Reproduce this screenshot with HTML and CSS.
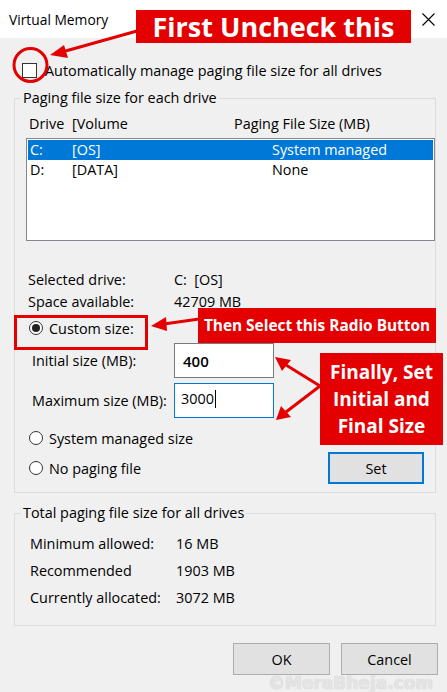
FILE: index.html
```html
<!DOCTYPE html>
<html lang="en">
<head>
<meta charset="utf-8">
<title>Virtual Memory</title>
<link rel="stylesheet" href="styles.css">
</head>
<body>
<div class="window">
  <header class="titlebar">
    <span class="title">Virtual Memory</span>
    <svg class="close" width="13" height="13" viewBox="0 0 13 13"><path d="M0.5 0.5 L12.5 12.5 M12.5 0.5 L0.5 12.5" stroke="#000" stroke-width="1.1" fill="none"/></svg>
  </header>

  <main class="dialog">
    <div class="auto-row">
      <span class="checkbox"></span>
      <span>Automatically manage paging file size for all drives</span>
    </div>

    <fieldset class="group g1">
      <legend>Paging file size for each drive</legend>
      <div class="g1-body">
        <div class="list-head">
          <span>Drive</span><span>[Volume</span><span>Paging File Size (MB)</span>
        </div>
        <div class="listbox">
          <div class="list-row selected"><span>C:</span><span>[OS]</span><span>System managed</span></div>
          <div class="list-row"><span>D:</span><span>[DATA]</span><span>None</span></div>
        </div>

        <div class="info">
          <span>Selected drive:</span><span>C:&nbsp; [OS]</span>
          <span>Space available:</span><span>42709 MB</span>
        </div>

        <div class="radio-row custom">
          <span class="radio checked"></span><span>Custom size:</span>
        </div>

        <div class="sizes">
          <span class="size-label">Initial size (MB):</span>
          <div class="input initial">400</div>
          <span class="size-label">Maximum size (MB):</span>
          <div class="input focused">3000<span class="caret"></span></div>
        </div>

        <div class="bottom-row">
          <div class="radios">
            <div class="radio-row"><span class="radio"></span><span>System managed size</span></div>
            <div class="radio-row"><span class="radio"></span><span>No paging file</span></div>
          </div>
          <div class="btn set">Set</div>
        </div>
      </div>
    </fieldset>

    <fieldset class="group g2">
      <legend>Total paging file size for all drives</legend>
      <div class="totals">
        <span>Minimum allowed:</span><span>16 MB</span>
        <span>Recommended</span><span>1903 MB</span>
        <span>Currently allocated:</span><span>3072 MB</span>
      </div>
    </fieldset>

    <div class="actions">
      <div class="btn">OK</div>
      <div class="btn">Cancel</div>
    </div>
  </main>

  <div class="note note1">First Uncheck this</div>
  <div class="note note2">Then Select this Radio Button</div>
  <div class="note note3">Finally, Set<br>Initial and<br>Final Size</div>

  <svg class="marks" width="447" height="692" viewBox="0 0 447 692">
    <g stroke="#e40000" stroke-width="3" fill="none">
      <circle cx="30.5" cy="65" r="16.5"/>
      <rect x="15.5" y="316.5" width="131" height="32"/>
      <line x1="137" y1="31" x2="62" y2="52"/>
      <line x1="199" y1="319" x2="164" y2="324"/>
      <line x1="320" y1="386" x2="286" y2="365"/>
      <line x1="320" y1="386" x2="286" y2="412"/>
    </g>
    <g fill="#e40000">
      <polygon points="50,55 64,45 68,58"/>
      <polygon points="151,326 166,317 167,331"/>
      <polygon points="275,357 291,360 282,371"/>
      <polygon points="276,420 281,406 291,417"/>
    </g>
  </svg>

  <div class="watermark">©MeraBheja.com</div>
</div>
</body>
</html>
```
FILE: styles.css
```css
* { box-sizing: border-box; }

html, body {
  margin: 0;
  padding: 0;
}

body {
  width: 447px;
  height: 692px;
  overflow: hidden;
  background: #f0f0f0;
  font-family: "Open Sans", "Noto Sans", "Liberation Sans", sans-serif;
  font-size: 14.4px;
  color: #000;
}

.window {
  position: relative;
  width: 447px;
  height: 692px;
}

.titlebar {
  height: 38px;
  background: #fff;
  display: flex;
  align-items: center;
  justify-content: space-between;
  padding: 0 12px 0 9px;
}

.title {
  font-size: 13.8px;
}

.close { display: block; }

.dialog {
  padding: 0 11px 0 14px;
}

.auto-row {
  display: flex;
  align-items: center;
  gap: 8px;
  height: 20px;
  margin-top: 22px;
  padding-left: 8px;
  white-space: nowrap;
}

.checkbox {
  width: 15px;
  height: 15px;
  border: 1px solid #333;
  background: #fff;
  flex: none;
}

.group {
  margin: 0;
  padding: 0;
  border: 1px solid #dcdcdc;
  min-width: 0;
}

.group legend {
  margin-left: 6px;
  padding: 0 2px;
  line-height: 20px;
  white-space: nowrap;
}

.g1 { margin-top: 8px; padding-bottom: 8px; }

.g1-body {
  padding: 6px 0 0 11px;
}

.list-head {
  display: grid;
  grid-template-columns: 43px 162px 1fr;
  height: 20px;
  line-height: 20px;
  padding-left: 3px;
  white-space: nowrap;
}

.listbox {
  margin-top: 4px;
  height: 103px;
  border: 1px solid #828790;
  background: #fff;
  padding: 1px;
}

.list-row {
  display: grid;
  grid-template-columns: 42px 200px 1fr;
  height: 20px;
  line-height: 20px;
  padding-left: 2px;
  white-space: nowrap;
}

.list-row.selected {
  background: #0078d7;
  color: #fff;
}

.info {
  display: grid;
  grid-template-columns: 146px 1fr;
  grid-auto-rows: 22px;
  align-items: center;
  margin-top: 27px;
  padding-left: 2px;
  white-space: nowrap;
}

.radio-row {
  display: flex;
  align-items: center;
  gap: 6px;
  height: 20px;
  padding-left: 3px;
  white-space: nowrap;
}

.custom { margin-top: 6px; }

.radio {
  width: 14px;
  height: 14px;
  border: 1px solid #333;
  border-radius: 50%;
  background: #fff;
  flex: none;
  position: relative;
}

.radio.checked::after {
  content: "";
  position: absolute;
  left: 2px;
  top: 2px;
  width: 8px;
  height: 8px;
  border-radius: 50%;
  background: #222;
}

.sizes {
  display: grid;
  grid-template-columns: 148px 100px;
  grid-template-rows: 35px 35px;
  row-gap: 5px;
  align-items: center;
  margin-top: 5px;
  white-space: nowrap;
}

.size-label { padding-left: 6px; }

.input {
  height: 100%;
  border: 1px solid #7a7a7a;
  background: #fff;
  display: flex;
  align-items: center;
  padding-left: 7px;
}

.input.initial {
  font-size: 15px;
  font-weight: 600;
  padding-left: 8px;
}

.input.focused {
  border-color: #0078d7;
  padding-left: 6px;
  padding-bottom: 4px;
}

.caret {
  display: inline-block;
  width: 1px;
  height: 18px;
  background: #000;
  margin-left: 1px;
}

.bottom-row {
  display: flex;
  justify-content: space-between;
  margin-top: 10px;
}

.radios {
  display: flex;
  flex-direction: column;
  gap: 10px;
}

.btn {
  width: 97px;
  height: 32px;
  background: #e1e1e1;
  border: 1px solid #adadad;
  display: flex;
  align-items: center;
  justify-content: center;
}

.btn.set {
  width: 96px;
  margin-top: 24px;
  margin-right: 11px;
  border: 2px solid #0078d7;
}

.g2 { margin-top: 10px; padding-bottom: 14px; }

.totals {
  display: grid;
  grid-template-columns: 146px 1fr;
  grid-auto-rows: 27px;
  align-items: center;
  padding: 7px 0 0 15px;
  white-space: nowrap;
}

.actions {
  display: flex;
  justify-content: flex-end;
  gap: 11px;
  margin-top: 17px;
  margin-right: -2px;
}

/* annotations */
.note {
  position: absolute;
  background: #e40000;
  color: #fff;
  font-family: "Open Sans", "Noto Sans", sans-serif;
  font-weight: 700;
  display: flex;
  align-items: center;
  justify-content: center;
  text-align: center;
  white-space: nowrap;
}

.note1 {
  left: 136px;
  top: 10px;
  width: 275px;
  height: 33px;
  font-size: 27px;
}

.note2 {
  left: 198px;
  top: 308px;
  width: 238px;
  height: 35px;
  font-size: 15.4px;
}

.note3 {
  left: 320px;
  top: 353px;
  width: 123px;
  height: 92px;
  font-size: 19px;
  line-height: 27px;
}

.marks {
  position: absolute;
  left: 0;
  top: 0;
  pointer-events: none;
}

.watermark {
  position: absolute;
  left: 268px;
  top: 675px;
  font-family: "DejaVu Sans", sans-serif;
  font-weight: 700;
  font-size: 17px;
  line-height: 17px;
  color: #e4e4e4;
  text-shadow: 0 0 1px #c8c8c8;
  white-space: nowrap;
}
```
